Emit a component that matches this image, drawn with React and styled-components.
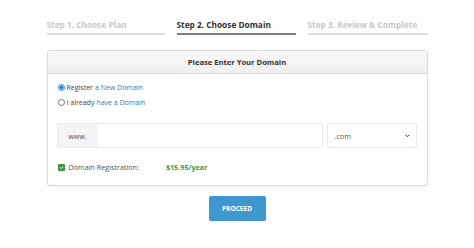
import styled, { createGlobalStyle } from "styled-components";

const GlobalStyle = createGlobalStyle`
  * {
    box-sizing: border-box;
  }
  body {
    margin: 0;
    background: #fff;
    font-family: "Open Sans", "Liberation Sans", sans-serif;
    color: #444;
  }
`;

const Page = styled.div`
  width: 381px;
  margin: 0 auto;
  padding-top: 20px;
`;

const Steps = styled.div`
  display: grid;
  grid-template-columns: 118px 119px 120px;
  column-gap: 12px;
`;

const Step = styled.div`
  font-size: 8.3px;
  font-weight: 700;
  color: ${(p) => (p.$active ? "#333" : "#c9c9c9")};
  padding-bottom: 3px;
  border-bottom: 2px solid ${(p) => (p.$active ? "#7b7b7b" : "#dedede")};
  line-height: 10px;
`;

const Panel = styled.div`
  margin-top: 15px;
  border: 1px solid #dcdcdc;
  border-radius: 3px;
  box-shadow: 0 1px 2px rgba(0, 0, 0, 0.08);
`;

const PanelHeader = styled.div`
  height: 23px;
  display: flex;
  align-items: center;
  justify-content: center;
  background: linear-gradient(#f9f9f9, #eeeeee);
  border-bottom: 1px solid #d8d8d8;
  font-size: 7.6px;
  font-weight: 700;
  color: #333;
`;

const PanelBody = styled.div`
  padding: 6px 10px 13px 9px;
`;

const RadioRow = styled.label`
  display: flex;
  align-items: center;
  gap: 2px;
  font-size: 7px;
  height: 15px;
  color: #444;
`;

const Radio = styled.span`
  width: 7px;
  height: 7px;
  border-radius: 50%;
  border: 1px solid ${(p) => (p.$checked ? "#2e7fd6" : "#777")};
  background: ${(p) => (p.$checked ? "radial-gradient(#2e7fd6 55%, #fff 60%)" : "#fff")};
  margin-left: 1px;
`;

const Link = styled.span`
  color: #2f7bbf;
`;

const InputRow = styled.div`
  display: flex;
  margin-top: 13px;
  height: 25px;
  gap: 4px;
`;

const InputGroup = styled.div`
  flex: 1;
  display: flex;
  border: 1px solid #eaeaea;
  border-radius: 2px;
`;

const Addon = styled.div`
  width: 40px;
  background: #f4f4f4;
  display: flex;
  align-items: center;
  justify-content: center;
  font-size: 7.2px;
  color: #555;
`;

const Input = styled.div`
  flex: 1;
  background: #fff;
`;

const Select = styled.div`
  width: 90px;
  border: 1px solid #eaeaea;
  border-radius: 2px;
  display: flex;
  align-items: center;
  justify-content: space-between;
  padding: 0 6px 0 7px;
  font-size: 7.2px;
  color: #555;
`;

const CheckRow = styled.div`
  display: flex;
  align-items: center;
  height: 10px;
  margin-top: 14px;
  font-size: 7.2px;
  color: #555;
`;

const Check = styled.span`
  width: 7px;
  height: 7px;
  border-radius: 1px;
  background: #3f9a3f;
  display: flex;
  align-items: center;
  justify-content: center;
  margin: 0 4px 0 1px;
`;

const Price = styled.span`
  margin-left: 27px;
  color: #3c9a3c;
  font-weight: 700;
`;

const ButtonRow = styled.div`
  display: flex;
  justify-content: center;
  margin-top: 10px;
`;

const Button = styled.button`
  width: 57px;
  height: 25px;
  border: none;
  border-radius: 2px;
  background: #3f97d0;
  color: #fff;
  font-family: inherit;
  font-size: 6.6px;
  font-weight: 700;
`;

export default function App() {
  return (
    <>
      <GlobalStyle />
      <Page>
        <Steps>
          <Step>Step 1. Choose Plan</Step>
          <Step $active>Step 2. Choose Domain</Step>
          <Step>Step 3. Review &amp; Complete</Step>
        </Steps>
        <Panel>
          <PanelHeader>Please Enter Your Domain</PanelHeader>
          <PanelBody>
            <RadioRow>
              <Radio $checked />
              Register <Link>a New Domain</Link>
            </RadioRow>
            <RadioRow>
              <Radio />
              I already <Link>have a Domain</Link>
            </RadioRow>
            <InputRow>
              <InputGroup>
                <Addon>www.</Addon>
                <Input />
              </InputGroup>
              <Select>
                .com
                <svg width="5" height="4" viewBox="0 0 10 7">
                  <path d="M1 1l4 4 4-4" fill="none" stroke="#333" strokeWidth="2" />
                </svg>
              </Select>
            </InputRow>
            <CheckRow>
              <Check>
                <svg width="5" height="5" viewBox="0 0 10 10">
                  <path d="M2 5l2 2 4-4" fill="none" stroke="#fff" strokeWidth="2" />
                </svg>
              </Check>
              Domain Registration:
              <Price>$15.95/year</Price>
            </CheckRow>
          </PanelBody>
        </Panel>
        <ButtonRow>
          <Button>PROCEED</Button>
        </ButtonRow>
      </Page>
    </>
  );
}
